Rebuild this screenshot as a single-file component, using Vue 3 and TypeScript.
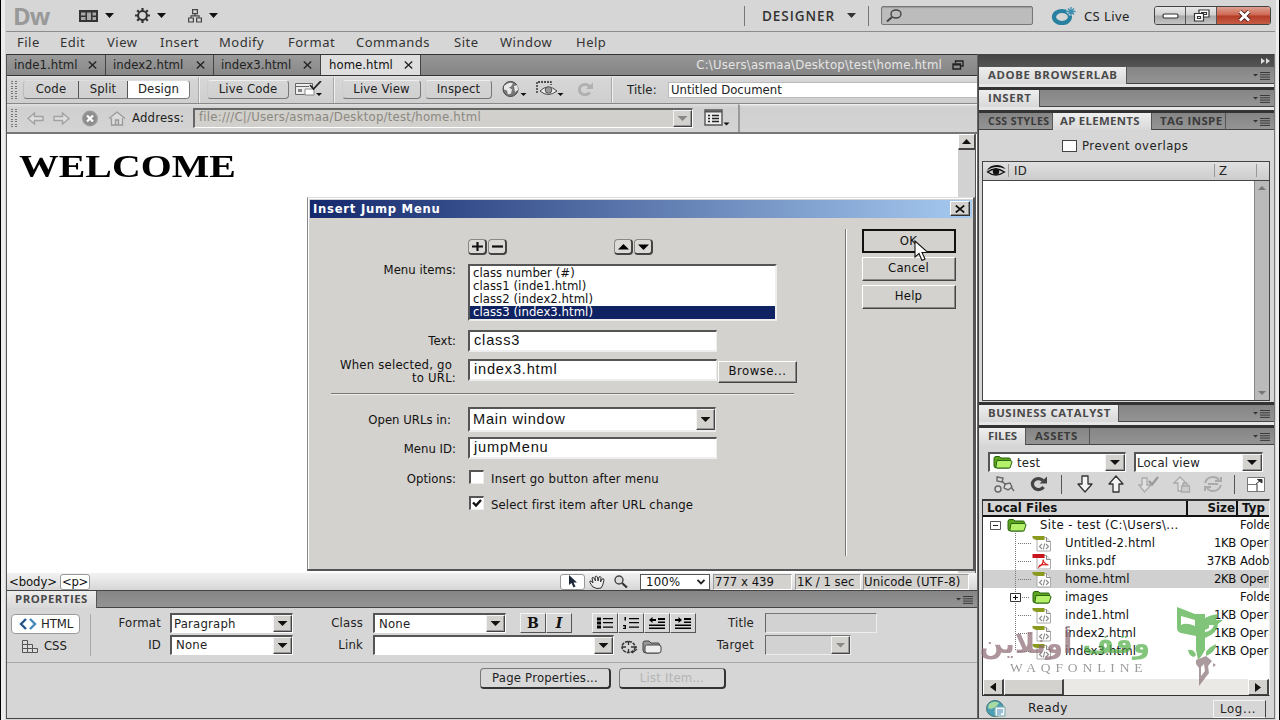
<script setup lang="ts">
interface FileRow { name: string; size: string; type: string; kind: 'html' | 'pdf' | 'folder' | 'site'; selected?: boolean }

const menus: { label: string; w: number }[] = [
  { label: 'File', w: 43 }, { label: 'Edit', w: 47 }, { label: 'View', w: 53 }, { label: 'Insert', w: 59 },
  { label: 'Modify', w: 69 }, { label: 'Format', w: 68 }, { label: 'Commands', w: 98 },
  { label: 'Site', w: 46 }, { label: 'Window', w: 76 }, { label: 'Help', w: 60 },
]
const tabs: { label: string; w: number; active?: boolean }[] = [
  { label: 'inde1.html', w: 99 }, { label: 'index2.html', w: 108 },
  { label: 'index3.html', w: 107 }, { label: 'home.html', w: 100, active: true },
]
const items: string[] = ['class number (#)', 'class1 (inde1.html)', 'class2 (index2.html)', 'class3 (index3.html)']
const files: FileRow[] = [
  { name: 'Site - test (C:\\Users\\...', size: '', type: 'Folder', kind: 'site' },
  { name: 'Untitled-2.html', size: '1KB', type: 'Opera', kind: 'html' },
  { name: 'links.pdf', size: '37KB', type: 'Adobe', kind: 'pdf' },
  { name: 'home.html', size: '2KB', type: 'Opera', kind: 'html', selected: true },
  { name: 'images', size: '', type: 'Folder', kind: 'folder' },
  { name: 'inde1.html', size: '1KB', type: 'Opera', kind: 'html' },
  { name: 'index2.html', size: '1KB', type: 'Opera', kind: 'html' },
  { name: 'index3.html', size: '1KB', type: 'Opera', kind: 'html' },
]
</script>

<template>
  <div class="app">
    <svg class="defs" width="0" height="0">
      <symbol id="i-folder" viewBox="0 0 20 14">
        <path d="M1 3.500Q1 1.500 3 1.500h3.500l1.500 1.500h8q1.500 0 1.500 1.500v7q0 1.500-1.500 1.500H4q-3 0-3-2z" fill="#5ba51e" stroke="#2d6410" />
        <path d="M4 5.500h13q2 0 2 1.500l-1.500 4.500q-.5 1.500-2 1.500H4.500Q3 13 3 11.500z" fill="#b4f06a" stroke="#2d6410" />
      </symbol>
      <symbol id="i-html" viewBox="0 0 20 17">
        <path d="M5 2.500h9.500l4 4V16H5z" fill="#fff" stroke="#aaa" />
        <path d="M14.500 2.500v4h4" fill="#eee" stroke="#888" />
        <path d="M.5 1h12v4H5.500Q2 5 .5 3z" fill="#8a9a1c" />
        <path d="M10 9l-2.500 2.500L10 14M14 9l2.500 2.500L14 14M12.700 8.500l-1.400 6" fill="none" stroke="#888" stroke-width="1.100" />
      </symbol>
      <symbol id="i-pdf" viewBox="0 0 20 17">
        <path d="M5 2.500h9.500l4 4V16H5z" fill="#fff" stroke="#aaa" />
        <path d="M14.500 2.500v4h4" fill="#eee" stroke="#888" />
        <path d="M.5 1h12v4H.5z" fill="#c8141c" />
        <path d="M11 6.500q.5 4 5.500 5.500M11 6.500q1 5-5 8M7 12.500q4-1.500 9-.5" fill="none" stroke="#d22" stroke-width="1.200" />
      </symbol>
      <symbol id="i-menu" viewBox="0 0 17 8">
        <path d="M0 2h5L2.500 4.500z" fill="#333" />
        <path d="M7 .500h10M7 2.800h10M7 5.100h10M7 7.400h10" stroke="#3a3a3a" stroke-width="1" />
      </symbol>
      <symbol id="i-refresh" viewBox="0 0 18 16">
        <path d="M13.500 11A6 5.500 0 1 1 13 4.500" fill="none" stroke="currentColor" stroke-width="3.200" />
        <path d="M17 .5v7H9.500z" fill="currentColor" />
      </symbol>
      <symbol id="i-arrow" viewBox="0 0 16 18">
        <path d="M5 1h6v8h4l-7 8-7-8h4z" fill="#f4f4f4" stroke="currentColor" stroke-width="1.300" stroke-linejoin="round" />
      </symbol>
    </svg>

    <header class="titlebar">
      <span class="dw">Dw</span>
      <svg class="t-layout" width="19" height="12"><path d="M0 0h19v12H0z" fill="#333" /><path d="M2 2.500h4.500v3H2zM2 7h4.500v3H2zM8 2.500h4v7.500H8zM13.500 2.500h3.500v3h-3.500zM13.500 7h3.500v3h-3.500z" fill="#a8a8a8" /></svg>
      <i class="tri" />
      <svg class="t-gear" width="15" height="15" viewBox="0 0 15 15"><circle cx="7.500" cy="7.500" r="4.400" fill="none" stroke="#333" stroke-width="2" /><path d="M7.500 0v3M7.500 12v3M0 7.500h3M12 7.500h3M2.200 2.200l2 2M10.800 10.800l2 2M2.200 12.800l2-2M10.800 4.200l2-2" stroke="#333" stroke-width="2.200" /></svg>
      <i class="tri" />
      <svg class="t-site" width="14" height="14" viewBox="0 0 14 14" fill="none" stroke="#444" stroke-width="1.200"><path d="M4.600.600h4.800v4H4.600zM.600 9h4.800v4H.600zM8.600 9h4.800v4H8.600zM7 4.600v2.200M3 9V6.800h8V9" /></svg>
      <i class="tri" />
      <i class="vline v1" />
      <span class="designer">DESIGNER</span>
      <i class="tri small" />
      <i class="vline v2" />
      <div class="search"><svg width="16" height="13" viewBox="0 0 16 13" fill="none" stroke="#444"><ellipse cx="10" cy="5" rx="5" ry="4" stroke-width="1.400" /><path d="M6 8l-5 4.500" stroke-width="2" /></svg></div>
      <svg class="cs" width="26" height="18" viewBox="0 0 26 18"><ellipse cx="11" cy="10" rx="8" ry="6" fill="none" stroke="#2880a0" stroke-width="4.200" /><path d="M20 0v9M15.500 4.500h9M17 1.500l6 6M17 7.500l6-6" stroke="#d6d6d6" stroke-width="2.600" /><path d="M20 0v9M15.500 4.500h9M17 1.500l6 6M17 7.500l6-6" stroke="#3a8eae" stroke-width="1.300" /></svg>
      <span class="cslive">CS Live</span>
      <div class="winbtns">
        <b><svg width="17" height="6"><rect x="1" y="1" width="15" height="4" rx="1.500" fill="#fff" stroke="#333" stroke-width="1.200" /></svg></b>
        <b><svg width="17" height="13" fill="#fff" stroke="#333" stroke-width="1.200"><path d="M6 1h10v7H6z" /><path d="M8.500 3.500h5v2h-5z" /><path d="M1.500 4.500h9V12h-9z" /><path d="M4.500 7.500h3v2h-3z" /></svg></b>
        <b class="close"><svg width="15" height="12" viewBox="0 0 15 12"><path d="M3 1.500l9 9M12 1.500l-9 9" stroke="#502020" stroke-width="4.600" /><path d="M3 1.500l9 9M12 1.500l-9 9" stroke="#fff" stroke-width="2.800" /></svg></b>
      </div>
    </header>

    <nav class="menubar"><span v-for="m in menus" :key="m.label" :style="{ width: m.w + 'px' }">{{ m.label }}</span></nav>

    <div class="body">
      <main class="left">
        <div class="doctabs">
          <div v-for="t in tabs" :key="t.label" class="doctab" :class="{ on: t.active }" :style="{ width: t.w + 'px' }">
            <span>{{ t.label }}</span><svg width="9" height="8"><path d="M.8.500l7.400 7M8.200.500L.8 7.500" stroke="#222" stroke-width="1.300" /></svg>
          </div>
          <span class="path">C:\Users\asmaa\Desktop\test\home.html</span>
          <svg class="restore" width="12" height="10" fill="none" stroke="#222" stroke-width="1.400"><path d="M3.500 3V1h7.500v5H9" /><path d="M1 4h7.500v5H1zM1 4.700h7.500" /></svg>
        </div>

        <div class="toolbar">
          <i class="grip" />
          <div class="seg"><span class="code">Code</span><span class="split">Split</span><span class="design">Design</span></div>
          <i class="sep s1" />
          <span class="tbtn lc">Live Code</span>
          <svg class="i-check" width="28" height="17" viewBox="0 0 28 17"><path d="M.500 2.500h17v11H.500z" fill="#eee" stroke="#666" /><path d="M1 5.500h13" stroke="#666" /><rect x="3" y="8" width="4" height="3" fill="#888" /><path d="M10 8h9v6h-9z" fill="#fff" stroke="#888" /><path d="M15 4l3.500 4L26 0" fill="none" stroke="#222" stroke-width="1.800" /><path d="M21 12h6l-3 3z" fill="#111" /></svg>
          <i class="sep s2" />
          <span class="tbtn lv">Live View</span>
          <span class="tbtn ins">Inspect</span>
          <svg class="i-globe" width="26" height="17" viewBox="0 0 26 17"><circle cx="9.500" cy="8" r="7.500" fill="#777" stroke="#444" /><path d="M3 5q5-5 9-2.500l-2 3-2 1 3 2-1 4-3 1-1-4-3-1zM13 5l3.500-1 .5 5-3 2z" fill="#e8e8e8" /><path d="M19.500 12h6l-3 3z" fill="#111" /></svg>
          <svg class="i-eye" width="28" height="17" viewBox="0 0 28 17"><path d="M1 12V1h14v3" fill="none" stroke="#222" stroke-dasharray="2 1" stroke-width="1.300" /><path d="M4 10q8-8 17 0-9 7-17 0z" fill="#eee" stroke="#444" /><circle cx="12.500" cy="9" r="3.300" fill="#999" stroke="#555" /><path d="M21.500 12h6l-3 3z" fill="#111" /></svg>
          <svg class="i-ref" width="17" height="15"><use href="#i-refresh" /></svg>
          <i class="sep s3" />
          <span class="ttl">Title:</span>
          <div class="titlein">Untitled Document</div>
        </div>

        <div class="address">
          <i class="grip" />
          <svg class="nav" width="90" height="17" viewBox="0 0 90 17" fill="#dedede" stroke="#a2a2a2" stroke-width="1.400"><path d="M1 8.500L7.500 3v3.500H16v4H7.500V14zM42 8.500L35.500 3v3.500H27v4h8.500V14z" /><circle cx="63" cy="8.500" r="7.200" fill="#8d8d8d" stroke="#999" /><path d="M60 5.500l6 6M66 5.500l-6 6" stroke="#fff" stroke-width="2.200" /></svg>
          <svg class="home" width="18" height="15" viewBox="0 0 18 15" fill="#ddd" stroke="#999" stroke-width="1.300"><path d="M1 7.500L9 1l8 6.500M3.500 7v7h11V7M7.500 14V9h3v5" /></svg>
          <span class="addr">Address:</span>
          <div class="addrin"><span>file:///C|/Users/asmaa/Desktop/test/home.html</span><b class="drop off"><i /></b></div>
          <svg class="i-list" width="26" height="18" viewBox="0 0 26 18"><path d="M1 1h17v15H1z" fill="#eee" stroke="#555" stroke-width="1.400" /><path d="M1 2.500h17" stroke="#555" stroke-width="2" /><path d="M4 6.500h2M4 9.500h2M4 12.500h2M8 6.500h7M8 9.500h7M8 12.500h7" stroke="#222" stroke-width="1.500" /><path d="M19.500 13.500h6l-3 3z" fill="#111" /></svg>
          <div class="blank" />
        </div>

        <div class="canvas">
          <div class="page"><h1>WELCOME</h1></div>
          <div class="vscroll"><b><i /></b></div>
        </div>

        <div class="status">
          <span class="tag">&lt;body&gt;</span><span class="tag sel-tag">&lt;p&gt;</span>
          <span class="ptr"><svg width="10" height="13" viewBox="0 0 10 13"><path d="M1 0v10l2.500-2 2 4.500 2-1-2-4H9z" fill="#1c2738" /></svg></span>
          <svg class="hand" width="17" height="14" viewBox="0 0 17 14"><path d="M4 12Q0 7 1 6t3 2L3 3q1-2 2.500 1l1 2L6 2q1-2 2.500 0L9 6l1-4q1.500-1.500 2 .5L11.500 7 13 4q2-1 2 1-1 6-3 8-4 1.500-8-1z" fill="#eee" stroke="#333" /></svg>
          <svg class="mag" width="14" height="13" viewBox="0 0 14 13"><circle cx="5" cy="5" r="4" fill="#ddd" stroke="#444" stroke-width="1.400" /><path d="M8 8l5 4.500" stroke="#333" stroke-width="2.200" /></svg>
          <span class="zoom">100%<svg width="8" height="6"><path d="M.500 1l3.500 3.500L7.500 1" fill="none" stroke="#222" stroke-width="1.800" /></svg></span>
          <span class="box b1">777 x 439</span><span class="box b2">1K / 1 sec</span><span class="box b3">Unicode (UTF-8)</span>
        </div>

        <section class="props">
          <div class="bar"><span class="ptab on">PROPERTIES</span><svg class="pm" width="17" height="8"><use href="#i-menu" /></svg></div>
          <div class="fields">
            <div class="modes">
              <div class="mode on"><svg width="18" height="12" viewBox="0 0 18 12" fill="none" stroke-width="2.400"><path d="M7 1L2 6l5 5" stroke="#26568c" /><path d="M11 1l5 5-5 5" stroke="#4488bb" /></svg>HTML</div>
              <div class="mode"><svg width="17" height="13" fill="#ddd" stroke="#555"><path d="M.500.500h5v4h-5zM.500 4.500h5v4h-5zM.500 8.500h5v4h-5zM5.500 4.500h5v4h-5zM5.500 8.500h5v4h-5zM10.500 8.500h5v4h-5z" /></svg>CSS</div>
            </div>
            <div class="pg">
              <div class="prow">
                <label class="l1">Format</label><div class="sel w1">Paragraph<b class="drop"><i /></b></div>
                <label class="l2">Class</label><div class="sel w2 in">None<b class="drop"><i /></b></div>
                <b class="pb bold">B</b><b class="pb ital">I</b>
                <b class="pb lst"><svg width="16" height="12"><path d="M0 .500h4v3H0zM0 4.500h4v3H0zM0 8.500h4v3H0z" /><path d="M6 1h10v1.300H6zM6 5h10v1.300H6zM6 9.500h10v1.300H6z" /></svg></b>
                <b class="pb"><svg width="16" height="12"><path d="M1.500 0h1.500v3.500H1.500zM0 8h3v4H0v-1h1.800v-.8H.5v-.8h1.300V9H0z" /><path d="M6 1h10v1.300H6zM6 5h10v1.300H6zM6 9.500h10v1.300H6z" /></svg></b>
                <b class="pb"><svg width="16" height="12"><path d="M0 3l3.500-3v2H7v2H3.500v2zM9 1h7v2H9zM9 4.500h7v1.500H9zM0 7.500h16V9H0zM0 10.500h16V12H0z" /></svg></b>
                <b class="pb"><svg width="16" height="12"><path d="M7 3L3.500 0v2H0v2h3.500v2zM9 1h7v2H9zM9 4.500h7v1.500H9zM0 7.500h16V9H0zM0 10.500h16V12H0z" /></svg></b>
                <label class="l3">Title</label><div class="sel w3 gray" />
              </div>
              <div class="prow">
                <label class="l1">ID</label><div class="sel w1 in">None<b class="drop"><i /></b></div>
                <label class="l2 lk">Link</label><div class="sel w4"><b class="drop"><i /></b></div>
                <svg class="target" width="17" height="15" viewBox="0 0 17 15" fill="none" stroke="#333"><ellipse cx="7.500" cy="7" rx="6.500" ry="5.500" stroke-width="1.500" stroke-dasharray="3 1" /><path d="M7.500 1v4M7.500 9v4M1 7h4M10 7h6M11 13l5-4" stroke-width="1.300" /></svg>
                <svg class="pfold" width="20" height="14" viewBox="0 0 20 14"><path d="M1 3q0-2 2-2h4l2 2h7q1.500 0 1.500 2v6q0 2-2 2H4q-3 0-3-3z" fill="#999" stroke="#444" /><path d="M4.500 5H17q2 0 2 2v4q0 2-2 2H5q-2 0-2-2V7q0-2 1.500-2z" fill="#eee" stroke="#444" /></svg>
                <label class="l4">Target</label><div class="sel w5 gray"><b class="drop off"><i /></b></div>
              </div>
            </div>
          </div>
          <div class="pbtns"><span class="rb r1">Page Properties...</span><span class="rb r2">List Item...</span></div>
        </section>
      </main>

      <aside class="dock">
        <div class="dtop"><svg width="9" height="6"><path d="M0 0l4 3-4 3zM5 0l4 3-4 3z" fill="#ddd" /></svg></div>
        <div class="pbar"><span class="ptab on a1">ADOBE BROWSERLAB</span><svg class="pm" width="17" height="8"><use href="#i-menu" /></svg></div>
        <div class="pbar"><span class="ptab on a2">INSERT</span><svg class="pm" width="17" height="8"><use href="#i-menu" /></svg></div>
        <div class="pbar flat"><span class="ptab a3">CSS STYLES</span><span class="ptab on a4">AP ELEMENTS</span><span class="ptab a5">TAG INSPE</span><svg class="pm" width="17" height="8"><use href="#i-menu" /></svg></div>
        <div class="ap">
          <div class="prevent"><i />Prevent overlaps</div>
          <div class="aptable">
            <div class="aphead">
              <svg width="19" height="11" viewBox="0 0 19 11"><path d="M0 6Q8-1 19 4q-3-4-9-4Q3 0 0 6z" fill="#111" /><path d="M1 7q8-6 17 0-9 6-17 0z" fill="#ccc" stroke="#111" stroke-width="1.300" /><circle cx="9.500" cy="6.500" r="3.200" fill="#111" /></svg>
              <span class="h-id">ID</span><span class="h-z">Z</span><span class="h-e" />
            </div>
            <div class="apbody"><div class="apscroll"><i class="up" /><i class="dn" /></div></div>
          </div>
        </div>
        <div class="pbar bc"><span class="ptab on a6">BUSINESS CATALYST</span><svg class="pm" width="17" height="8"><use href="#i-menu" /></svg></div>
        <div class="pbar flat"><span class="ptab on a7">FILES</span><span class="ptab a8">ASSETS</span><svg class="pm" width="17" height="8"><use href="#i-menu" /></svg></div>
        <div class="files">
          <div class="fsel">
            <div class="sel f1"><svg width="20" height="14"><use href="#i-folder" /></svg>test<b class="drop"><i /></b></div>
            <div class="sel f2">Local view<b class="drop"><i /></b></div>
          </div>
          <div class="ftools">
            <svg class="g1" width="22" height="17" viewBox="0 0 22 17" fill="#ddd" stroke="#666" stroke-width="1.400"><circle cx="5" cy="13" r="3" /><path d="M4 1l6 1-1 4-5-1zM9 5l4 4M12 8l5-1 2 4-4 3-4-2zM18 11l3 4" /></svg>
            <svg class="g2" width="18" height="16"><use href="#i-refresh" /></svg>
            <i class="fs" />
            <svg class="g3" width="16" height="18"><use href="#i-arrow" /></svg>
            <svg class="g4 flip" width="16" height="18"><use href="#i-arrow" /></svg>
            <svg class="g5" width="21" height="17" viewBox="0 0 21 17" fill="#e0e0e0" stroke="#aaa" stroke-width="1.300"><path d="M4 2h5v7h4l-6.500 7L1 9h3z" /><path d="M11 5l3 3.500L20 1" fill="none" stroke="#999" stroke-width="2.200" /></svg>
            <svg class="g6" width="18" height="17" viewBox="0 0 18 17" fill="#e0e0e0" stroke="#aaa" stroke-width="1.300"><path d="M7 1l6 6h-3v8H5V7H1z" /><path d="M8.500 10h8v6h-8zM10.500 10V8q2-2 4 0v2" fill="#ccc" /></svg>
            <svg class="g7" width="20" height="16" viewBox="0 0 20 16" fill="none" stroke="#aaa" stroke-width="2"><path d="M2 7q2-6 8-6 4 0 6 3M18 9q-2 6-8 6-4 0-6-3M12 5h6V1M8 11H2v4" /><path d="M5 8h10" /></svg>
            <i class="fs" />
            <svg class="g8" width="18" height="15" viewBox="0 0 18 15"><path d="M.5.500h17v14H.5z" fill="#fff" stroke="#777" /><path d="M1 7.500h9V14M10 14.500V7" stroke="#777" fill="none" /><path d="M9 7l5-4M10.500 2.500H15V6z" stroke="#333" fill="#333" /></svg>
          </div>
          <div class="ftable">
            <div class="fhead"><span>Local Files</span><span class="r">Size</span><span class="t">Typ</span></div>
            <div class="flist">
              <svg class="tree" width="70" height="140" viewBox="0 0 70 140" fill="none" stroke="#777" stroke-dasharray="1 1"><path d="M32.500 17v118M35 27.500h14M35 45.500h14M35 63.500h14M39 81.500h8M35 99.500h14M35 117.500h14M35 135.500h14" /></svg>
              <div v-for="f in files" :key="f.name" class="frow" :class="[f.kind, { hl: f.selected }]">
                <span class="fname">
                  <svg v-if="f.kind === 'site'" class="pm-box" width="11" height="9"><path d="M.5.500h10v8H.5z" fill="#fff" stroke="#555" /><path d="M3 4.500h5" stroke="#222" /></svg>
                  <svg v-if="f.kind === 'folder'" class="pm-box" width="11" height="9"><path d="M.5.500h10v8H.5z" fill="#fff" stroke="#333" /><path d="M3 4.500h5M5.500 2v5" stroke="#111" /></svg>
                  <svg v-if="f.kind === 'html'" class="fic" width="20" height="17"><use href="#i-html" /></svg>
                  <svg v-else-if="f.kind === 'pdf'" class="fic" width="20" height="17"><use href="#i-pdf" /></svg>
                  <svg v-else class="fic" width="20" height="14"><use href="#i-folder" /></svg>
                  <span class="ft">{{ f.name }}</span>
                </span>
                <span class="fsize">{{ f.size }}</span><span class="ftype">{{ f.type }}</span>
              </div>
            </div>
            <div class="hscroll"><b class="hb"><i class="lt" /></b><b class="thumb" /><b class="hb end"><i class="rt" /></b></div>
          </div>
          <div class="fstat">
            <svg width="21" height="17" viewBox="0 0 21 17"><ellipse cx="9" cy="8.500" rx="8.500" ry="8" fill="#4a9fb5" stroke="#477" /><path d="M3 4q5-4 10-1l-3 4-5 2-3-1zM8 11l6-2 2 4-5 3z" fill="#a8dca0" /><path d="M9 7h10v9H9z" fill="#eef6fb" stroke="#7aa" /><path d="M11 10h6M11 12h6M11 14h4" stroke="#4a86b0" /></svg>
            <span class="ready">Ready</span><span class="log">Log...</span>
          </div>
        </div>
      </aside>
    </div>

    <div class="dialog">
      <div class="dtitle"><span>Insert Jump Menu</span><b><svg width="10" height="8"><path d="M.8.500l8.400 7M9.200.500L.8 7.500" stroke="#111" stroke-width="1.700" /></svg></b></div>
      <div class="dbody">
        <div class="form">
          <div class="pmrow">
            <b class="mb"><svg width="11" height="9"><path d="M0 4.500h11M5.500 0v9" stroke="#111" stroke-width="2.200" /></svg></b>
            <b class="mb"><svg width="11" height="9"><path d="M0 4.500h11" stroke="#111" stroke-width="2.200" /></svg></b>
            <b class="mb ud"><svg width="11" height="6"><path d="M0 5.500h11L5.500 0z" /></svg></b>
            <b class="mb"><svg width="11" height="6"><path d="M0 .5h11L5.500 6z" /></svg></b>
          </div>
          <div class="drow d1"><label>Menu items:</label><div class="list"><div v-for="(it, n) in items" :key="it" :class="{ cur: n === 3 }">{{ it }}</div></div></div>
          <div class="drow d2"><label>Text:</label><div class="field">class3</div></div>
          <div class="drow d3"><label class="two"><span>When selected, go</span><br>to URL:</label><div class="field">index3.html</div><span class="browse">Browse...</span></div>
          <hr>
          <div class="drow d4"><label class="ou">Open URLs in:</label><div class="field main">Main window<b class="drop"><i /></b></div></div>
          <div class="drow d5"><label>Menu ID:</label><div class="field">jumpMenu</div></div>
          <div class="drow d6"><label>Options:</label><i class="cb" /><span class="o1">Insert go button after menu</span></div>
          <div class="drow d7"><label /><i class="cb"><svg width="10" height="9"><path d="M1 3.500l3 3L9 1" fill="none" stroke="#111" stroke-width="2.400" /></svg></i><span class="o2">Select first item after URL change</span></div>
        </div>
        <div class="dbtns"><span class="ok">OK</span><span>Cancel</span><span>Help</span></div>
      </div>
    </div>
    <svg class="cursor" width="15" height="22" viewBox="0 0 15 22"><path d="M1 1v16l4-3.500 3 7 3-1.500-3-6.500h6z" fill="#fff" stroke="#111" stroke-width="1.100" /></svg>

    <div class="mark">
      <div class="words"><div class="arab" dir="rtl"><span class="gr">وقف</span> <span class="mv">أونلاين</span></div><div class="latin">WAQFONLINE</div></div>
      <svg width="48" height="82" viewBox="0 0 48 82">
        <path d="M1 1L19 8h10v36q-3 6-7 10l-2-10V30L5 27Q1 26 1 22zM5 10v9q5-3 14 1v-6zM29 12q5-3 13-4l-2 6h7l-5 4q0 9-13 14v-6q7-1 9-7h-5v3l-4 2zM12 44q6-1 8 5l-2 2q-5-1-6-7zM30 46q3-5 10-8 0 8-10 12z" fill="#4fae46" fill-rule="evenodd" />
        <path d="M20 54l10-4 6 5-4 5 1 7-10 13V62l-3-4zM25 61v9l4-5-1-7zM37 57l3 2-3 2z" fill="#8a7378" fill-rule="evenodd" />
      </svg>
    </div>
  </div>
</template>

<style>
html, body { margin: 0; overflow: hidden; background: #e8e8e8; }
</style>

<style scoped>
* { box-sizing: border-box; }
.app { position: relative; width: 1280px; height: 720px; overflow: hidden; background: #d6d6d6; font: 11.700px/14px "DejaVu Sans", Verdana, sans-serif; letter-spacing: .2px; color: #222; border-left: 1px solid #000; border-right: 1px solid #000; padding: 0 4px 0 5px; white-space: nowrap; box-shadow: inset 4px 0 #ececec, inset -3px 0 #eee; display: flex; flex-direction: column; }
.defs { position: absolute; }
svg { flex: none; display: block; }
i, b { font-style: normal; flex: none; }

.titlebar { height: 32px; flex: none; display: flex; align-items: center; border-bottom: 1px solid #8c8c8c; }
.dw { width: 73px; padding-left: 7px; font: 700 24px/28px "Open Sans", sans-serif; color: #999; letter-spacing: -.9px; }
.tri { width: 9px; height: 5px; background: #111; clip-path: polygon(0 0, 100% 0, 50% 100%); margin-left: 7px; }
.t-gear { margin-left: 21px; }
.t-site { margin-left: 22px; }
.vline { width: 1px; height: 20px; background: #777; }
.v1 { margin-left: 526px; }
.designer { padding-left: 17px; font: 600 13.500px/16px "Open Sans", sans-serif; color: #333; letter-spacing: .95px; box-sizing: content-box; width: 76px; }
.tri.small { margin-left: 9px; background: #333; }
.v2 { margin-left: 12px; }
.search { width: 152px; height: 19px; margin-left: 12px; border: 1px solid #777; border-radius: 2px; background: #bcbcbc; padding: 2px 4px; box-shadow: inset 0 1px 1px #999; }
.cs { margin-left: 18px; }
.cslive { width: 77px; padding-left: 7px; font: 13px/16px "Noto Sans", sans-serif; letter-spacing: .4px; }
.winbtns { display: flex; width: 117px; height: 19px; border: 1px solid #444; border-radius: 3px; overflow: hidden; }
.winbtns b { width: 31px; display: flex; align-items: center; justify-content: center; background: linear-gradient(#e8e8e8, #cfcfcf 48%, #a8a8a8 52%, #c4c4c4); border-right: 1px solid #555; }
.winbtns .close { width: 54px; border: 0; background: linear-gradient(#dda090, #cd6650 48%, #b43c26 52%, #c65c45); }

.menubar { height: 22px; flex: none; display: flex; padding-left: 11px; font: 13px/21px "Noto Sans", sans-serif; letter-spacing: .5px; color: #333; }
.menubar span { flex: none; }

.body { display: flex; height: 665px; }
.left { width: 972px; flex: none; border-left: 1px solid #555; border-top: 1px solid #333; height: 665px; border-right: 1px solid #666; display: flex; flex-direction: column; border-bottom: 1px solid #444; }
.doctabs { height: 21px; flex: none; display: flex; background: linear-gradient(#969696, #858585); border-bottom: 1px solid #333; }
.doctab { flex: none; display: flex; align-items: center; justify-content: space-between; padding: 0 8px 1px 7px; border-right: 1px solid #444; color: #222; background: linear-gradient(#9b9b9b, #888); letter-spacing: .05px; }
.doctab.on { background: #dedede; color: #111; padding: 0 7px 1px 8px; }
.path { width: 521px; flex: none; text-align: right; line-height: 20px; color: #e6e6e6; letter-spacing: .22px; }
.restore { margin: 5px 0 0 10px; }

.toolbar { height: 28px; flex: none; display: flex; align-items: center; background: linear-gradient(#e4e4e4 0, #d6d6d6 3px, #cfcfcf); border-bottom: 1px solid #888; letter-spacing: .12px; }
.grip { width: 6px; height: 18px; margin-left: 4px; background: repeating-linear-gradient(#777 0 1px, transparent 1px 2.500px); -webkit-mask: linear-gradient(90deg, #000 0 2px, transparent 2px 4px, #000 4px); mask: linear-gradient(90deg, #000 0 2px, transparent 2px 4px, #000 4px); }
.seg { display: flex; height: 19px; margin-left: 6px; border: 1px solid #aaa; border-color: #ddd #777 #777 #bbb; border-radius: 4px; line-height: 16px; text-align: center; overflow: hidden; flex: none; }
.seg span { border-right: 1px solid #555; }
.seg .code { width: 55px; } .seg .split { width: 49px; } .seg .design { width: 63px; background: #fff; border: 1px solid #555; margin: -1px; line-height: 17px; }
.sep { width: 2px; height: 26px; border-left: 1px solid #aaa; border-right: 1px solid #f0f0f0; }
.s1 { margin-left: 8px; }
.tbtn { height: 19px; border: 1px solid; border-color: #eee #777 #777 #ccc; border-radius: 4px; text-align: center; line-height: 16px; flex: none; }
.lc { width: 82px; margin-left: 7px; } .i-check { margin-left: 6px; } .s2 { margin-left: 10px; }
.lv { width: 79px; margin-left: 7px; } .ins { width: 67px; margin-left: 4px; }
.i-globe { margin-left: 9px; } .i-eye { margin-left: 9px; } .i-ref { margin-left: 13px; color: #b0b0b0; }
.s3 { margin-left: 17px; }
.ttl { margin-left: 14px; width: 41px; }
.titlein { width: 309px; height: 16px; background: #fff; border: 1px solid #bbb; border-right: 0; padding-left: 2px; line-height: 15px; flex: none; letter-spacing: .02px; }

.address { height: 30px; flex: none; display: flex; align-items: center; background: linear-gradient(#e0e0e0, #d0d0d0 4px, #d4d4d4); border-bottom: 2px solid #777; }
.nav { margin-left: 10px; width: 90px; }
.home { margin-left: -9px; }
.addr { margin-left: 6px; width: 61px; }
.addrin { width: 500px; height: 20px; border: 2px solid #666; border-right: 1px solid #fff; border-bottom: 1px solid #fff; background: #d2d0cc; color: #8a8880; display: flex; justify-content: space-between; padding-left: 4px; line-height: 15px; letter-spacing: .24px; }
.i-list { margin-left: 11px; }
.blank { margin-left: 8px; align-self: stretch; flex: 1; border-left: 2px solid #999; border-top: 1px solid #f0f0f0; }

.drop { width: 19px; height: 100%; margin-left: auto; background: #d4d2ce; border: 1px solid; border-color: #f4f4f4 #444 #444 #f4f4f4; box-shadow: inset -1px -1px #999; display: flex; align-items: center; justify-content: center; flex: none; }
.drop i { width: 10px; height: 5px; background: #111; clip-path: polygon(0 0, 100% 0, 50% 100%); }
.drop.off i { background: #888; }

.canvas { height: 439px; flex: none; display: flex; background: #fff; }
.page { width: 951px; flex: none; }
h1 { margin: 13px 0 0 12px; font: bold 32.500px/38px "Liberation Serif", serif; color: #000; transform: scaleX(1.225); transform-origin: 0 0; letter-spacing: 0; }
.vscroll { width: 18px; background: #d2d2d2; border-right: 1px solid #555; }
.vscroll b { display: flex; align-items: center; justify-content: center; width: 17px; height: 16px; border: 1px solid; border-color: #fff #444 #444 #fff; border-bottom-width: 2px; background: #d6d4d0; }
.vscroll i { width: 9px; height: 5px; background: #111; clip-path: polygon(50% 0, 100% 100%, 0 100%); }

.status { height: 18px; flex: none; display: flex; align-items: center; background: linear-gradient(#f2f2f2, #e2e2e2 60%, #d6d6d6); border-bottom: 1px solid #444; color: #111; }
.tag { width: 53px; padding-left: 2px; letter-spacing: -.1px; }
.tag.sel-tag { width: 30px; height: 16px; line-height: 15px; padding-left: 1px; background: #fff; border: 1px solid #999; border-radius: 3px; letter-spacing: -.4px; }
.ptr { margin-left: 470px; width: 25px; height: 16px; background: #fff; border: 1px solid #999; border-radius: 3px; display: flex; align-items: center; justify-content: center; }
.hand { margin-left: 4px; } .mag { margin-left: 8px; }
.zoom { margin-left: 12px; width: 70px; height: 16px; background: #fff; border: 1px solid #555; display: flex; align-items: center; justify-content: space-between; padding: 0 4px 0 5px; }
.box { height: 16px; line-height: 15px; border: 1px solid; border-color: #999 #fff #fff #999; background: #d4d2ce; margin-left: 3px; padding-left: 1px; flex: none; letter-spacing: 0; }
.b1 { width: 79px; } .b2 { width: 66px; } .b3 { width: 106px; margin-left: 2px; padding-left: 0; letter-spacing: .15px; }

.bar, .pbar { display: flex; background: linear-gradient(#858585, #949494); height: 17px; flex: none; border-bottom: 1px solid #444; font: 700 11.400px/16px "Open Sans", sans-serif; }
.ptab { color: #3a3a3a; padding-left: 9px; letter-spacing: .62px; border-right: 1px solid #555; overflow: hidden; flex: none; height: 17px; line-height: 16px; }
.ptab.on { background: linear-gradient(#eee, #d8d8d8); color: #4a4a4a; }
.pm { margin: 5px 4px 0 auto; }
.bar .ptab { width: 90px; padding-left: 8px; letter-spacing: .5px; }
.bar .pm { margin-right: 4px; }
.fields { height: 55px; display: flex; border-bottom: 1px solid #aaa; }
.modes { width: 84px; margin: 6px 0; padding-left: 4px; border-right: 1px solid #aaa; }
.mode { width: 69px; height: 20px; display: flex; align-items: center; padding-left: 7px; gap: 4px; border: 1px solid transparent; margin-bottom: 2px; letter-spacing: -.1px; }
.mode + .mode { padding-left: 10px; gap: 5px; }
.mode.on { background: #fff; border-color: #999; border-radius: 4px; }
.prow { display: flex; height: 20px; margin-bottom: 2px; line-height: 20px; }
.pg { padding-top: 5px; }
label { text-align: right; flex: none; }
.sel { height: 20px; background: #fff; border: 2px solid #555; border-right: 1px solid #fff; border-bottom: 1px solid #fff; display: flex; padding-left: 2px; line-height: 18px; flex: none; }
.sel.in { padding-left: 4px; }
.sel.gray { background: #d2d2d2; border-color: #777 #eee #eee #666; border-width: 1px; }
.l1 { width: 70px; margin-right: 9px; } .w1 { width: 123px; }
.l2 { width: 70px; margin-right: 10px; } .w2 { width: 133px; }
.pb { width: 26px; height: 20px; border: 1px solid; border-color: #f4f4f4 #555 #555 #f4f4f4; display: flex; align-items: center; justify-content: center; color: #111; }
.bold { margin-left: 14px; font: bold 14px "DejaVu Serif", serif; } .ital { font: italic bold 14px "DejaVu Serif", serif; } .lst { margin-left: 20px; }
.l3 { width: 58px; margin-right: 11px; } .w3 { width: 112px; }
.w4 { width: 241px; } .target { margin: 5px 0 0 7px; } .pfold { margin: 5px 0 0 4px; } .l4 { width: 92px; margin-right: 11px; } .w5 { width: 86px; }
.prow + .prow .sel { line-height: 17px; }
.pbtns { display: flex; padding: 5px 0 0 473px; gap: 8px; }
.rb { height: 21px; border: 1px solid #777; border-right: 2px solid #333; border-bottom: 2px solid #333; border-radius: 4px; text-align: center; line-height: 18px; background: #d8d8d8; }
.r1 { width: 131px; } .r2 { width: 107px; color: #b4b4b4; }

.dock { width: 297px; flex: none; border-left: 1px solid #444; border-right: 1px solid #777; height: 665px; background: #d6d6d6; border-bottom: 1px solid #555; }
.dtop { height: 13px; background: linear-gradient(#444, #555); display: flex; justify-content: flex-end; align-items: center; padding-right: 4px; }
.pbar { position: relative; height: 17px; margin-bottom: 6px; box-shadow: 0 3px #e6e6e6, 0 6px #333; }
.pbar.flat { margin: 0; box-shadow: none; }
.pbar.bc { box-shadow: 0 -3px #333, 0 3px #e6e6e6, 0 6px #333; }
.a1 { width: 148px; } .a2 { width: 61px; } .a3 { width: 74px; font-size: 10.500px; letter-spacing: .45px; } .a4 { width: 99px; padding-left: 7px; letter-spacing: .3px; } .a5 { width: 74px; padding-left: 8px; letter-spacing: .45px; } .a6 { width: 140px; letter-spacing: .55px; } .a7 { width: 47px; letter-spacing: 0; } .a8 { width: 64px; letter-spacing: .5px; }
.ap { height: 275px; padding: 9px 4px 0 3px; }
.prevent { display: flex; align-items: center; padding-left: 80px; height: 14px; letter-spacing: .5px; }
.prevent i { width: 15px; height: 12px; background: #fff; border: 1px solid #444; margin-right: 5px; }
.aptable { margin-top: 8px; height: 240px; border: 1px solid #444; background: #fff; }
.aphead { display: flex; height: 19px; border-bottom: 1px solid #444; background: linear-gradient(#e0e0e0, #ccc); }
.aphead svg { margin: 3px 2px 0 3px; width: 20px; }
.aphead span { border-left: 1px solid #999; height: 13px; line-height: 14px; margin-top: 2px; }
.h-id { width: 206px; padding-left: 5px; } .h-z { width: 42px; padding-left: 4px; } .h-e { width: 10px; }
.apbody { height: 219px; display: flex; justify-content: flex-end; }
.apscroll { width: 15px; background: #bababa; border-left: 1px solid #888; display: flex; flex-direction: column; justify-content: space-between; align-items: center; padding: 5px 0; }
.apscroll i { width: 8px; height: 4px; background: #777; clip-path: polygon(50% 0, 100% 100%, 0 100%); }
.apscroll .dn { transform: rotate(180deg); }

.files { padding: 7px 4px 0 3px; }
.fsel { display: flex; gap: 8px; padding-left: 6px; }
.f1 { width: 138px; height: 20px; } .f1 svg { margin: 1px 4px 0 1px; } .f2 { width: 129px; height: 20px; padding-left: 1px; }
.f1 .drop { width: 20px; } .f2 .drop { width: 20px; }
.ftools { display: flex; align-items: center; height: 24px; margin-bottom: 3px; padding-left: 11px; overflow: hidden; color: #333; }
.fs { width: 1px; height: 19px; background: #555; }
.g2 { margin: 0 13px 0 15px; color: #444; } .g3 { margin-left: 15px; } .g4 { margin-left: 15px; } .flip { transform: rotate(180deg); } .g5 { margin-left: 14px; } .g6 { margin-left: 14px; } .g7 { margin: 0 11px 0 12px; } .g8 { margin-left: 12px; }
.ftable { border: 1px solid #333; border-right-color: #eee; border-top-width: 2px; background: #fff; height: 197px; overflow: hidden; }
.fhead { display: flex; height: 16px; background: #d4d4d4; border-bottom: 2px solid #111; font-weight: bold; line-height: 15px; color: #111; font-size: 11.800px; letter-spacing: .05px; }
.fhead span { width: 205px; padding-left: 4px; border-right: 2px solid #111; flex: none; }
.fhead .r { width: 50px; text-align: right; padding-right: 1px; } .fhead .t { border: 0; width: 34px; }
.flist { position: relative; height: 163px; color: #111; margin-top: -1px; letter-spacing: .12px; }
.tree { position: absolute; left: 0; top: 0; }
.frow { height: 18px; display: flex; align-items: center; }
.frow.hl { background: #d0d0d0; }
.fname { width: 204px; display: flex; align-items: center; flex: none; position: relative; }
.fic { margin-left: 49px; margin-right: 13px; }
.html .fic, .pdf .fic { margin-top: 1px; }
.pm-box { margin-left: 7px; }
.site .fic { margin-left: 6px; } .site .ft { letter-spacing: .4px; }
.folder .pm-box { margin-left: 27px; } .folder .fic { margin-left: 11px; }
.fsize { width: 49px; flex: none; text-align: right; letter-spacing: -.35px; }
.ftype { padding-left: 4px; flex: none; letter-spacing: -.1px; }
.hscroll { height: 17px; display: flex; background: #ebe9e6; }
.hscroll b { background: #d4d2ce; border: 1px solid; border-color: #fff #444 #444 #fff; border-bottom-width: 2px; border-right-width: 2px; }
.hb { width: 21px; display: flex; align-items: center; justify-content: center; } .hb.end { margin-left: auto; }
.thumb { width: 60px; }
.lt, .rt { width: 6px; height: 9px; background: #111; clip-path: polygon(0 50%, 100% 0, 100% 100%); } .rt { transform: rotate(180deg); }
.fstat { display: flex; align-items: center; height: 22px; padding-left: 4px; margin-top: 1px; }
.ready { margin-left: 21px; width: 185px; letter-spacing: .4px; font-size: 12.200px; }
.log { width: 53px; height: 18px; border: 1px solid; border-color: #f4f4f4 #444 #f4f4f4 #f4f4f4; line-height: 17px; padding-left: 6px; margin-top: 1px; letter-spacing: .7px; }

.dialog { position: absolute; left: 306px; top: 197px; width: 668px; height: 374px; background: #d4d2ce; border: 1px solid #ddd; border-left: 1px solid #888; border-bottom: 2px solid #555; border-right: 2px solid #555; box-shadow: inset 1px 1px #fff; padding: 2px 1px 0 2px; color: #111; }
.dtitle { height: 18px; background: linear-gradient(90deg, #14286c, #a6caf0); display: flex; align-items: center; justify-content: space-between; padding: 0 2px 1px 3px; color: #fff; font-weight: bold; font-size: 11.600px; letter-spacing: .75px; }
.dtitle b { width: 20px; height: 15px; background: #d4d2ce; border: 1px solid; border-color: #fff #333 #333 #fff; display: flex; align-items: center; justify-content: center; box-shadow: inset -1px -1px #888; }
.dbody { display: flex; padding-top: 11px; }
.form { width: 536px; height: 327px; border-right: 1px solid #777; box-shadow: 1px 0 #fff; padding-top: 10px; }
.pmrow { display: flex; padding-left: 158px; gap: 1px; height: 25px; }
.mb { width: 19px; height: 16px; border: 1px solid #888; border-right: 2px solid #444; border-bottom: 2px solid #444; border-radius: 4px; display: flex; align-items: center; justify-content: center; background: #dcdad6; }
.ud { margin-left: 106px; }
.drow { display: flex; }
.drow > label { width: 146px; margin-right: 12px; letter-spacing: .02px; }
.d1 { height: 66px; }
.d1 label { line-height: 12px; }
.list { width: 309px; height: 57px; background: #fff; border: 2px solid #555; border-right-color: #eee; border-bottom-color: #eee; padding-top: 1px; line-height: 13px; letter-spacing: .05px; }
.list div { padding-left: 3px; height: 13px; } .list .cur { background: #0f2262; color: #fff; }
.field { width: 249px; height: 22px; background: #fff; border: 2px solid #555; border-right: 1px solid #eee; border-bottom: 2px solid #eee; padding-left: 4px; font: 14.600px/16px "Liberation Sans", sans-serif; letter-spacing: .8px; display: flex; flex: none; }
.d2 { height: 29px; } .d2 label { padding-top: 4px; }
.drow > .two { line-height: 13px; letter-spacing: .2px; } .two span { margin-right: 4px; }
.d3 { height: 34px; }
.browse { width: 79px; height: 22px; margin: 2px 0 0 1px; border: 1px solid; border-color: #fff #444 #444 #fff; box-shadow: inset -1px -1px #888; text-align: center; line-height: 19px; letter-spacing: .45px; }
hr { margin: 0 51px 0 21px; border: 0; border-top: 1px solid #777; border-bottom: 1px solid #eee; height: 2px; }
.d4 { margin-top: 12px; height: 30px; } .d4 > label { width: 141px; margin-right: 17px; padding-top: 6px; }
.drow > .ou { width: 141px; margin-right: 17px; }
.field.main { height: 25px; width: 248px; padding-left: 3px; line-height: 21px; font-size: 14.600px; letter-spacing: .75px; }
.d5 { height: 33px; } .d5 label { padding-top: 5px; }
.d6 { height: 26px; } .d6 label, .o1, .o2 { padding-top: 2px; }
.o2 { letter-spacing: .13px; }
.cb { width: 15px; height: 14px; background: #fff; border: 2px solid #555; border-right: 1px solid #eee; border-bottom: 1px solid #eee; margin: 0 7px 0 1px; padding: 1px; }
.dbtns { padding-left: 16px; display: flex; flex-direction: column; gap: 4px; }
.dbtns span { width: 94px; height: 24px; border: 1px solid; border-color: #fff #444 #444 #fff; box-shadow: inset -1px -1px #888; text-align: center; line-height: 21px; padding-right: 1px; }
.dbtns .ok { border: 2px solid #111; box-shadow: none; line-height: 20px; }
.cursor { position: absolute; left: 913px; top: 240px; }

.mark { position: absolute; left: 979px; top: 606px; width: 244px; height: 84px; opacity: .72; display: flex; justify-content: space-between; }
.words { padding-top: 20px; width: 170px; }
.arab { font: bold 27.500px/34px "DejaVu Sans", sans-serif; letter-spacing: 0; text-align: right; width: 170px; }
.gr { color: #55b04b; } .mv { color: #8f6d76; }
.latin { font: 13.500px/16px "Liberation Serif", serif; letter-spacing: 4.900px; color: #777; padding-left: 30px; }
</style>
